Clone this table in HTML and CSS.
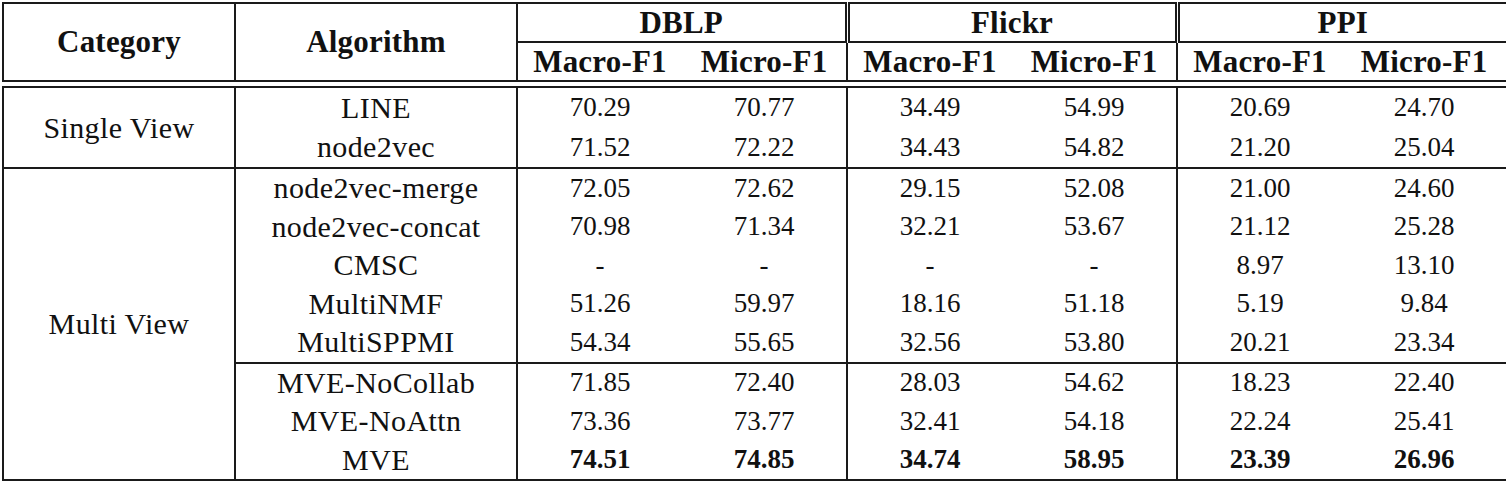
FILE: index.html
```html
<!DOCTYPE html>
<html lang="en">
  <head>
    <meta charset="UTF-8" />
    <meta name="viewport" content="width=device-width, initial-scale=1.0" />
    <title>Node Classification Results</title>
    <link rel="stylesheet" href="styles.css">
  </head>
  <body>
    <table class="results">
      <colgroup>
        <col class="col-cat" />
        <col class="col-alg" />
        <col class="col-num" /><col class="col-num" />
        <col class="col-num" /><col class="col-num" />
        <col class="col-num" /><col class="col-num" />
      </colgroup>
      <thead>
        <tr class="head-top">
          <th rowspan="2" class="cat">Category</th>
          <th rowspan="2" class="alg">Algorithm</th>
          <th colspan="2" class="group split">DBLP</th>
          <th colspan="2" class="group split">Flickr</th>
          <th colspan="2" class="group">PPI</th>
        </tr>
        <tr class="head-sub">
          <th>Macro-F1</th>
          <th class="edge">Micro-F1</th>
          <th>Macro-F1</th>
          <th class="edge">Micro-F1</th>
          <th>Macro-F1</th>
          <th>Micro-F1</th>
        </tr>
      </thead>
      <tbody>
        <tr class="gap"><td colspan="8"></td></tr>
      </tbody>
      <tbody class="block single">
        <tr>
          <td rowspan="2" class="cat">Single View</td>
          <td class="alg">LINE</td>
          <td>70.29</td><td class="edge">70.77</td>
          <td>34.49</td><td class="edge">54.99</td>
          <td>20.69</td><td>24.70</td>
        </tr>
        <tr>
          <td class="alg">node2vec</td>
          <td>71.52</td><td class="edge">72.22</td>
          <td>34.43</td><td class="edge">54.82</td>
          <td>21.20</td><td>25.04</td>
        </tr>
      </tbody>
      <tbody class="block">
        <tr>
          <td rowspan="8" class="cat">Multi View</td>
          <td class="alg">node2vec-merge</td>
          <td>72.05</td><td class="edge">72.62</td>
          <td>29.15</td><td class="edge">52.08</td>
          <td>21.00</td><td>24.60</td>
        </tr>
        <tr>
          <td class="alg">node2vec-concat</td>
          <td>70.98</td><td class="edge">71.34</td>
          <td>32.21</td><td class="edge">53.67</td>
          <td>21.12</td><td>25.28</td>
        </tr>
        <tr>
          <td class="alg">CMSC</td>
          <td>-</td><td class="edge">-</td>
          <td>-</td><td class="edge">-</td>
          <td>8.97</td><td>13.10</td>
        </tr>
        <tr>
          <td class="alg">MultiNMF</td>
          <td>51.26</td><td class="edge">59.97</td>
          <td>18.16</td><td class="edge">51.18</td>
          <td>5.19</td><td>9.84</td>
        </tr>
        <tr>
          <td class="alg">MultiSPPMI</td>
          <td>54.34</td><td class="edge">55.65</td>
          <td>32.56</td><td class="edge">53.80</td>
          <td>20.21</td><td>23.34</td>
        </tr>
        <tr class="sep">
          <td class="alg">MVE-NoCollab</td>
          <td>71.85</td><td class="edge">72.40</td>
          <td>28.03</td><td class="edge">54.62</td>
          <td>18.23</td><td>22.40</td>
        </tr>
        <tr>
          <td class="alg">MVE-NoAttn</td>
          <td>73.36</td><td class="edge">73.77</td>
          <td>32.41</td><td class="edge">54.18</td>
          <td>22.24</td><td>25.41</td>
        </tr>
        <tr class="best">
          <td class="alg">MVE</td>
          <td>74.51</td><td class="edge">74.85</td>
          <td>34.74</td><td class="edge">58.95</td>
          <td>23.39</td><td>26.96</td>
        </tr>
      </tbody>
    </table>
  </body>
</html>
```

FILE: styles.css
```css
body {
  margin: 2px;
  background: #fff;
  color: #111;
  font-family: "Liberation Serif", serif;
}
.results {
  border-collapse: collapse;
  table-layout: fixed;
  width: 1504px;
}
.col-cat {
  width: 232px;
}
.col-alg {
  width: 282px;
}
.col-num {
  width: 165px;
}
.results th,
.results td {
  padding: 0;
  text-align: center;
  vertical-align: middle;
  font-family: "Liberation Serif", serif;
  border-left: 2px solid #1a1a1a;
  border-right: 2px solid #1a1a1a;
}
.results th {
  font-size: 31px;
  font-weight: bold;
  letter-spacing: 0.2px;
  border-top: 2px solid #1a1a1a;
  border-bottom: 2px solid #1a1a1a;
}
.head-top th {
  height: 37px;
}
.head-sub th {
  height: 37px;
  border-left: none;
  border-right: none;
}
.head-sub th:first-child {
  border-left: 2px solid #1a1a1a;
}
.head-sub th:last-child {
  border-right: 2px solid #1a1a1a;
}
.results .head-top .split {
  border-right: 5px double #1a1a1a;
}
.results .edge {
  border-right: 2px solid #1a1a1a;
}
.gap td {
  height: 4px;
  border-left: none;
  border-right: none;
}
.block td {
  font-size: 27px;
  height: 38.5px;
  border-left: none;
  border-right: none;
}
.single td {
  height: 39.5px;
}
.block {
  border-top: 2px solid #1a1a1a;
  border-bottom: 2px solid #1a1a1a;
}
.block td.cat,
.block td.alg {
  font-size: 30px;
  letter-spacing: 0.4px;
  border-left: 2px solid #1a1a1a;
  border-right: 2px solid #1a1a1a;
}
.block td:last-child {
  border-right: 2px solid #1a1a1a;
}
.block td.edge {
  border-right: 2px solid #1a1a1a;
}
.sep td {
  border-top: 2px solid #1a1a1a;
}
.best td {
  font-weight: bold;
}
.best td.alg {
  font-weight: normal;
}
```
